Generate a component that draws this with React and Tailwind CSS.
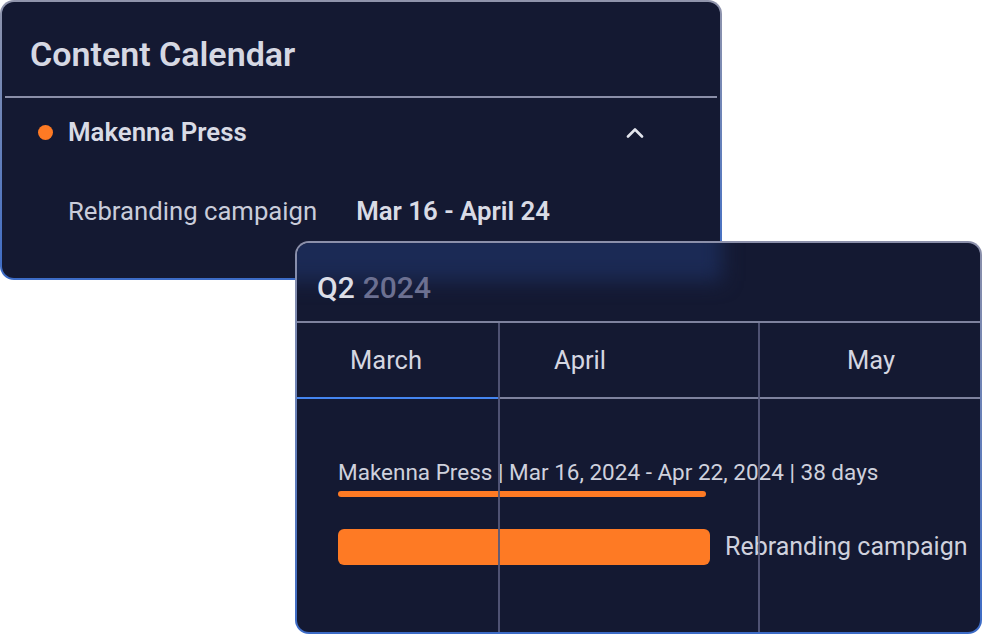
import React from "react";

export default function App() {
  return (
    <div className="w-[982px] h-[634px] bg-white overflow-hidden flex flex-col" style={{ fontFamily: "Roboto, 'Noto Sans', sans-serif" }}>
      {/* Card 1 */}
      <div className="w-[722px] h-[280px] rounded-[14px] p-[2px] bg-gradient-to-b from-[#9094ab] to-[#3c6bc6]">
        <div className="h-full rounded-[12px] bg-[#141932] flex flex-col">
          <div className="h-[94px] flex items-center pl-[28px] pt-[10px]">
            <h1 className="text-[34px] font-semibold text-[#d6d8e3]">Content Calendar</h1>
          </div>
          <div className="h-[2px] mx-[3px] bg-[#8a8ea8]" />
          <div className="h-[68px] flex items-center pl-[36px] pr-[76px]">
            <span className="w-[15px] h-[15px] rounded-full bg-[#fe7a24]" />
            <span className="ml-[15px] text-[25.8px] font-semibold text-[#d9dbe5]">Makenna Press</span>
            <svg className="ml-auto" width="18" height="11" viewBox="0 0 18 11" fill="none">
              <polyline points="2,9.5 9,2.5 16,9.5" stroke="#e2e4ec" strokeWidth="2.6" strokeLinecap="round" strokeLinejoin="round" />
            </svg>
          </div>
          <div className="h-[94px] flex items-center pl-[66px] pb-[4px]">
            <span className="text-[25.7px] text-[#c9ccda]">Rebranding campaign</span>
            <span className="ml-[39px] text-[25.8px] font-semibold text-[#d9dbe5]">Mar 16 - April 24</span>
          </div>
        </div>
      </div>

      {/* Card 2 */}
      <div className="ml-[295px] -mt-[39px] w-[687px] h-[393px] rounded-[14px] p-[2px] bg-gradient-to-b from-[#8c90aa] to-[#3c6bc6]">
        <div className="relative h-full rounded-[12px] bg-[#141932] flex flex-col overflow-hidden">
          <div className="absolute left-[-20px] top-[-20px] w-[445px] h-[58px] bg-[#1b2a55] blur-[10px] pointer-events-none" />
          <div className="relative h-[78px] flex items-center pl-[20px] pt-[10px]">
            <span className="text-[30px] font-medium text-[#dcdee7]">Q2</span>
            <span className="ml-[8px] text-[30px] font-medium text-[#6c7091]">2024</span>
          </div>
          <div className="h-[2px] bg-[#7e829e]" />
          <div className="relative flex-1 flex flex-col">
            <div className="grid grid-cols-[203px_260px_1fr] h-[76px]">
              <div className="flex items-center pl-[53px] border-b-2 border-[#4585f0]">
                <span className="text-[25.5px] text-[#d4d6e1]">March</span>
              </div>
              <div className="flex items-center pl-[54px] border-b-2 border-[#7e829e]">
                <span className="text-[25.5px] text-[#d4d6e1]">April</span>
              </div>
              <div className="flex items-center pl-[87px] border-b-2 border-[#7e829e]">
                <span className="text-[25.5px] text-[#d4d6e1]">May</span>
              </div>
            </div>
            <div className="flex flex-col pl-[41px] pt-[60px]">
              <span className="text-[22.5px] leading-[26px] text-[#cfd1dd]">Makenna Press | Mar 16, 2024 - Apr 22, 2024 | 38 days</span>
              <div className="mt-[6px] w-[368px] h-[6px] rounded-full bg-[#fe7a24]" />
              <div className="mt-[31px] flex items-center">
                <div className="w-[372px] h-[36px] rounded-[6px] bg-[#fe7a24]" />
                <span className="ml-[15px] text-[25px] text-[#cfd1dd]">Rebranding campaign</span>
              </div>
            </div>
            <div className="absolute inset-0 grid grid-cols-[203px_260px_1fr] pointer-events-none">
              <div className="border-r-2 border-[#55597a]/90" />
              <div className="border-r-2 border-[#55597a]/90" />
              <div />
            </div>
          </div>
        </div>
      </div>
    </div>
  );
}
